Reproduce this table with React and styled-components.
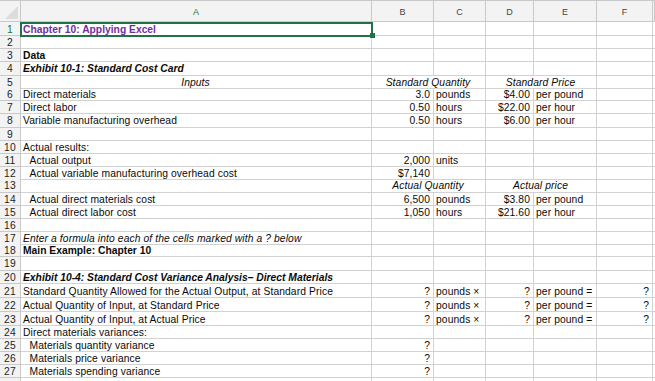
import React from "react";
import styled, { createGlobalStyle, css } from "styled-components";

const Global = createGlobalStyle`
  html, body { margin: 0; padding: 0; background: #fff; }
  body { width: 655px; height: 381px; overflow: hidden; font-family: "Liberation Sans", Arial, sans-serif; }
`;

const COLS = "21px 351px 62px 52px 48px 63px 56px 2px";
const LINE = "#d2d2d2";
const HEAD_LINE = "#c9c9c9";
const GREEN = "#217346";

const Sheet = styled.div`
  width: 655px;
  display: flex;
  flex-direction: column;
`;

const Row = styled.div`
  display: grid;
  grid-template-columns: ${COLS};
  height: ${(p) => p.$h}px;
`;

const HeaderRow = styled(Row)`
  background: #f3f3f3;
  border-top: 1px solid #c9c9c9;
  box-sizing: border-box;
`;

const Corner = styled.div`
  position: relative;
  border-right: 1px solid ${HEAD_LINE};
  border-bottom: 1px solid ${HEAD_LINE};
  box-sizing: border-box;
  svg { position: absolute; right: 2px; bottom: 2px; }
`;

const ColHead = styled.div`
  border-right: 1px solid ${HEAD_LINE};
  border-bottom: 1px solid ${HEAD_LINE};
  box-sizing: border-box;
  display: flex;
  align-items: center;
  justify-content: center;
  font-size: 9px;
  color: ${(p) => (p.$active ? GREEN : "#444")};
  padding-top: 1px;
`;

const RowHead = styled.div`
  background: #f3f3f3;
  border-right: 1px solid ${HEAD_LINE};
  border-bottom: 1px solid ${HEAD_LINE};
  box-sizing: border-box;
  display: flex;
  align-items: center;
  justify-content: center;
  font-size: 10.3px;
  letter-spacing: 0.2px;
  padding-top: 1px;
  color: ${(p) => (p.$active ? GREEN : "#1e1e1e")};
`;

const Cell = styled.div`
  position: relative;
  grid-column: span ${(p) => p.$span || 1};
  border-right: 1px solid ${LINE};
  border-bottom: 1px solid ${LINE};
  box-sizing: border-box;
  display: flex;
  align-items: center;
  justify-content: ${(p) =>
    p.$align === "right" ? "flex-end" : p.$align === "center" ? "center" : "flex-start"};
  padding: 1px 3px 0 ${(p) => 2 + (p.$indent ? 6.5 : 0)}px;
  font-size: 10.3px;
  letter-spacing: ${(p) => (p.$bold ? "0" : "0.1px")};
  color: ${(p) => p.$color || "#0a0a0a"};
  font-weight: ${(p) => (p.$bold ? 700 : 400)};
  font-style: ${(p) => (p.$italic ? "italic" : "normal")};
  white-space: nowrap;
  overflow: visible;
  ${(p) =>
    p.$selected &&
    css`
      z-index: 2;
    `}
`;

const Selection = styled.div`
  position: absolute;
  left: -1px;
  top: 0;
  right: -2px;
  bottom: -1.5px;
  border: 2px solid ${GREEN};
  pointer-events: none;
`;

const Handle = styled.div`
  position: absolute;
  right: -3.5px;
  bottom: -3.5px;
  width: 5px;
  height: 5px;
  background: ${GREEN};
`;

const Filler = styled.div`
  border-bottom: 1px solid ${LINE};
  box-sizing: border-box;
`;

const HEIGHTS = [14, 13.3, 13, 13.4, 12.6, 13, 13, 13.4, 13, 13, 13, 12.6, 13.4, 13, 13, 13, 12.6, 13, 13.4, 13.6, 14, 14, 13.7, 13.3, 13, 13, 13, 13];

const rows = [
  { A: { t: "Chapter 10: Applying Excel", bold: true, color: "#7030a0", selected: true } },
  {},
  { A: { t: "Data", bold: true } },
  { A: { t: "Exhibit 10-1: Standard Cost Card", bold: true, italic: true } },
  {
    A: { t: "Inputs", italic: true, align: "center" },
    BC: { t: "Standard Quantity", italic: true },
    DE: { t: "Standard Price", italic: true },
  },
  { A: { t: "Direct materials" }, B: "3.0", C: "pounds", D: "$4.00", E: "per pound" },
  { A: { t: "Direct labor" }, B: "0.50", C: "hours", D: "$22.00", E: "per hour" },
  { A: { t: "Variable manufacturing overhead" }, B: "0.50", C: "hours", D: "$6.00", E: "per hour" },
  {},
  { A: { t: "Actual results:" } },
  { A: { t: "Actual output", indent: true }, B: "2,000", C: "units" },
  { A: { t: "Actual variable manufacturing overhead cost", indent: true }, B: "$7,140" },
  { BC: { t: "Actual Quantity", italic: true }, DE: { t: "Actual price", italic: true } },
  { A: { t: "Actual direct materials cost", indent: true }, B: "6,500", C: "pounds", D: "$3.80", E: "per pound" },
  { A: { t: "Actual direct labor cost", indent: true }, B: "1,050", C: "hours", D: "$21.60", E: "per hour" },
  {},
  { A: { t: "Enter a formula into each of the cells marked with a ? below", italic: true } },
  { A: { t: "Main Example: Chapter 10", bold: true } },
  {},
  { A: { t: "Exhibit 10-4: Standard Cost Variance Analysis\u2013 Direct Materials", bold: true, italic: true } },
  { A: { t: "Standard Quantity Allowed for the Actual Output, at Standard Price" }, B: "?", C: "pounds \u00d7", D: "?", E: "per pound =", F: "?" },
  { A: { t: "Actual Quantity of Input, at Standard Price" }, B: "?", C: "pounds \u00d7", D: "?", E: "per pound =", F: "?" },
  { A: { t: "Actual Quantity of Input, at Actual Price" }, B: "?", C: "pounds \u00d7", D: "?", E: "per pound =", F: "?" },
  { A: { t: "Direct materials variances:" } },
  { A: { t: "Materials quantity variance", indent: true }, B: "?" },
  { A: { t: "Materials price variance", indent: true }, B: "?" },
  { A: { t: "Materials spending variance", indent: true }, B: "?" },
  {},
];

const RIGHT = { B: true, D: true, F: true };

function renderCells(row) {
  const out = [];
  const A = row.A;
  out.push(
    <Cell
      key="A"
      $align={A && A.align}
      $bold={A && A.bold}
      $italic={A && A.italic}
      $indent={A && A.indent}
      $color={A && A.color}
      $selected={A && A.selected}
    >
      {A && A.t}
      {A && A.selected && (
        <Selection>
          <Handle />
        </Selection>
      )}
    </Cell>
  );
  if (row.BC) {
    out.push(
      <Cell key="BC" $span={2} $align="center" $italic={row.BC.italic}>
        {row.BC.t}
      </Cell>
    );
  } else {
    ["B", "C"].forEach((k) =>
      out.push(
        <Cell key={k} $align={RIGHT[k] ? "right" : "left"}>
          {row[k]}
        </Cell>
      )
    );
  }
  if (row.DE) {
    out.push(
      <Cell key="DE" $span={2} $align="center" $italic={row.DE.italic}>
        {row.DE.t}
      </Cell>
    );
  } else {
    ["D", "E"].forEach((k) =>
      out.push(
        <Cell key={k} $align={RIGHT[k] ? "right" : "left"}>
          {row[k]}
        </Cell>
      )
    );
  }
  out.push(
    <Cell key="F" $align="right">
      {row.F}
    </Cell>
  );
  out.push(<Filler key="G" />);
  return out;
}

export default function App() {
  return (
    <>
      <Global />
      <Sheet>
        <HeaderRow $h={22}>
          <Corner>
            <svg width="13" height="13" viewBox="0 0 13 13">
              <polygon points="13,0 13,13 0,13" fill="#dcdcdc" />
            </svg>
          </Corner>
          {["A", "B", "C", "D", "E", "F"].map((c) => (
            <ColHead key={c} $active={c === "A"}>
              {c}
            </ColHead>
          ))}
          <ColHead />
        </HeaderRow>
        {rows.map((row, i) => (
          <Row key={i} $h={HEIGHTS[i]}>
            <RowHead $active={i === 0}>{i < 27 ? i + 1 : ""}</RowHead>
            {renderCells(row)}
          </Row>
        ))}
      </Sheet>
    </>
  );
}
